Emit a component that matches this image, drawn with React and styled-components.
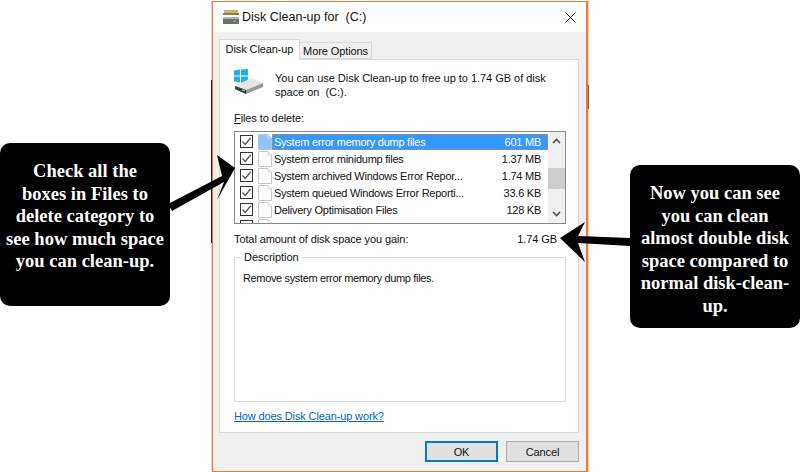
import React from "react";
import styled, { createGlobalStyle } from "styled-components";

const files = [
  { name: "System error memory dump files", size: "601 MB", selected: true },
  { name: "System error minidump files", size: "1.37 MB" },
  { name: "System archived Windows Error Repor...", size: "1.74 MB" },
  { name: "System queued Windows Error Reporti...", size: "33.6 KB" },
  { name: "Delivery Optimisation Files", size: "128 KB" },
];

const leftLines = ["Check all the", "boxes in Files to", "delete category to", "see how much space", "you can clean-up."];
const rightLines = ["Now you can see", "you can clean", "almost double disk", "space compared to", "normal disk-clean-", "up."];

const Global = createGlobalStyle`
  html, body { margin: 0; padding: 0; background: #fff; }
  #root { width: 800px; height: 472px; overflow: hidden; }
`;

const Page = styled.div`
  position: relative;
  width: 800px;
  height: 472px;
  display: grid;
  grid-template-columns: 170px 1fr 170px;
  background: #fff;
  font-family: "Liberation Sans", Arial, sans-serif;
  font-size: 11px;
  letter-spacing: -0.1px;
  color: #111;
`;

const Callout = styled.div`
  margin-top: ${(p) => p.$top}px;
  height: ${(p) => p.$height}px;
  box-sizing: border-box;
  padding-top: ${(p) => p.$pad}px;
  background: #000;
  border-radius: 10px;
  color: #fff;
  font-family: "Liberation Serif", serif;
  font-weight: bold;
  font-size: 18.5px;
  letter-spacing: 0;
  line-height: 22.6px;
  text-align: center;
  white-space: nowrap;
`;

const Middle = styled.div`
  display: flex;
  justify-content: center;
  padding-top: 1px;
`;

const Dialog = styled.div`
  width: 376px;
  height: 471px;
  box-sizing: border-box;
  border: 1px solid #f07a32;
  border-right-width: 2px;
  background: #f0f0f0;
  display: flex;
  flex-direction: column;
  box-shadow: -1px 0 0 #d8d8d8, 1px 0 0 #d8d8d8;
`;

const TitleBar = styled.div`
  height: 30px;
  flex: none;
  background: #fff;
  display: flex;
  align-items: center;
  padding: 0 10px 0 9px;
  gap: 2px;
  font-size: 12.5px;
  letter-spacing: 0;
`;

const TitleText = styled.span`
  flex: 1;
`;

const Tabs = styled.div`
  display: flex;
  align-items: flex-end;
  height: 27px;
  padding: 0 0 0 6px;
  flex: none;
`;

const Tab = styled.div`
  box-sizing: border-box;
  width: ${(p) => p.$width}px;
  height: ${(p) => (p.$active ? 21 : 17)}px;
  padding-bottom: ${(p) => (p.$active ? 2 : 0)}px;
  display: flex;
  align-items: center;
  justify-content: center;
  background: ${(p) => (p.$active ? "#fff" : "#f0f0f0")};
  border: 1px solid #d9d9d9;
  border-bottom: ${(p) => (p.$active ? "none" : "1px solid #d9d9d9")};
  border-left: ${(p) => (p.$active ? "1px solid #d9d9d9" : "none")};
  margin-bottom: ${(p) => (p.$active ? -1 : 0)}px;
  position: relative;
  z-index: ${(p) => (p.$active ? 1 : 0)};
`;

const Panel = styled.div`
  width: 360px;
  height: 374px;
  margin-left: 6px;
  box-sizing: border-box;
  background: #fff;
  border: 1px solid #d9d9d9;
  padding: 9px 12px 0 14px;
  display: flex;
  flex-direction: column;
`;

const Intro = styled.div`
  display: flex;
  gap: 11px;
  height: 41px;
  line-height: 14px;
`;

const IntroText = styled.div`
  padding-top: 2px;
  letter-spacing: -0.03px;
`;

const Label = styled.div`
  height: 17px;
  line-height: 17px;
  margin-bottom: 4px;
`;

const ListBox = styled.div`
  box-sizing: border-box;
  width: 332px;
  height: 93px;
  border: 1px solid #828790;
  display: flex;
  overflow: hidden;
`;

const Rows = styled.div`
  flex: 1;
  min-width: 0;
  padding-top: 1px;
`;

const Row = styled.div`
  height: 17px;
  display: flex;
  align-items: center;
  padding-left: 5px;
  gap: 5px;
`;

const Check = styled.div`
  box-sizing: border-box;
  width: 13px;
  height: 13px;
  flex: none;
  border: 1px solid #333;
  background: #fff;
  display: flex;
  align-items: center;
  justify-content: center;
`;

const RowLabel = styled.div`
  flex: 1;
  min-width: 0;
  height: 16px;
  display: flex;
  justify-content: space-between;
  align-items: center;
  padding: 0 7px 0 2px;
  margin-left: -5px;
  white-space: nowrap;
  letter-spacing: -0.25px;
  box-sizing: border-box;
  background: ${(p) => (p.$selected ? "#3399ff" : "transparent")};
  color: ${(p) => (p.$selected ? "#fff" : "#111")};
  outline: ${(p) => (p.$selected ? "1px dotted #e8862a" : "none")};
  outline-offset: -1px;
`;

const Scrollbar = styled.div`
  width: 17px;
  flex: none;
  background: #f0f0f0;
  display: flex;
  flex-direction: column;
  align-items: center;
  justify-content: space-between;
  padding: 6px 0;
  box-sizing: border-box;
  position: relative;
`;

const Thumb = styled.div`
  position: absolute;
  top: 36px;
  left: 0;
  width: 17px;
  height: 21px;
  background: #cdcdcd;
`;

const Total = styled.div`
  display: flex;
  justify-content: space-between;
  height: 17px;
  line-height: 17px;
  margin-top: 7px;
  width: 323px;
`;

const Group = styled.fieldset`
  box-sizing: border-box;
  width: 332px;
  height: 152px;
  margin: 2px 0 0;
  padding: 8px 8px 0 8px;
  border: 1px solid #d9d9d9;
  min-inline-size: 0;
  letter-spacing: -0.35px;
`;

const Legend = styled.legend`
  padding: 0 2px;
  margin-left: -1px;
  line-height: 14px;
  letter-spacing: -0.03px;
`;

const HelpLink = styled.a`
  margin-top: 6px;
  color: #0066cc;
  text-decoration: underline;
  line-height: 16px;
  letter-spacing: -0.13px;
`;

const Footer = styled.div`
  flex: 1;
  display: flex;
  justify-content: flex-end;
  gap: 8px;
  padding: 8px 7px 0 0;
`;

const Button = styled.div`
  box-sizing: border-box;
  width: 73px;
  height: 21px;
  display: flex;
  align-items: center;
  justify-content: center;
  background: #e1e1e1;
  border: ${(p) => (p.$primary ? "2px solid #0078d7" : "1px solid #adadad")};
`;

const Overlay = styled.svg`
  position: absolute;
  inset: 0;
  pointer-events: none;
`;

const Sliver = styled.div`
  position: absolute;
  left: ${(p) => p.$x}px;
  top: ${(p) => p.$y}px;
  width: 1px;
  height: ${(p) => p.$h}px;
  background: ${(p) => p.$c};
`;

const DriveIcon = () => (
  <svg width="18" height="16" viewBox="0 0 18 16">
    <rect x="2" y="1" width="14" height="3" fill="#c9b36a" />
    <rect x="1" y="4" width="16" height="2" fill="#8f7f45" />
    <rect x="1" y="8" width="16" height="7" fill="#6d6d6d" />
    <rect x="1" y="8" width="16" height="2" fill="#b5b5b5" />
    <rect x="11" y="11" width="3" height="2" fill="#4fc25a" />
  </svg>
);

const WinDriveIcon = () => (
  <svg width="30" height="26" viewBox="0 0 30 26" style={{ flex: "none" }}>
    <path d="M0 1.5 L6 0.6 V6.5 H0Z M7 0.5 L14 0 V6.5 H7Z M0 7.5 H6 V13.4 L0 12.5Z M7 7.5 H14 V14 L7 13.5Z" fill="#1fb0ea" />
    <path d="M1 17 L17 9 L29 14 L29 16 L12 24 L1 19Z" fill="#e6e6e6" />
    <path d="M1 17 L12 21 L29 14 L29 18 L12 25 L1 20Z" fill="#9a9a9a" />
    <path d="M1 17 L12 21 V25 L1 20Z" fill="#3d3d3d" />
    <rect x="8" y="20.5" width="3" height="1.5" fill="#6fd06f" />
  </svg>
);

const FileIcon = ({ selected }) => (
  <svg width="14" height="16" viewBox="0 0 14 16" style={{ flex: "none" }}>
    <path
      d="M0.5 0.5 H10 L13.5 4 V15.5 H0.5Z"
      fill={selected ? "#90c4f9" : "#fdfdfd"}
      stroke={selected ? "#a5c8ec" : "#c8c8c8"}
    />
    <path d="M10 0.5 V4 H13.5" fill="none" stroke={selected ? "#cfe4fa" : "#dcdcdc"} />
  </svg>
);

const Tick = () => (
  <svg width="11" height="11" viewBox="0 0 11 11">
    <path d="M1.5 5.5 L4.2 8.4 L9.6 2" fill="none" stroke="#555" strokeWidth="1.3" />
  </svg>
);

const Chevron = ({ up }) => (
  <svg width="9" height="6" viewBox="0 0 9 6">
    <path d={up ? "M1 5 L4.5 1.5 L8 5" : "M1 1 L4.5 4.5 L8 1"} fill="none" stroke="#505050" strokeWidth="1.6" />
  </svg>
);

const CloseIcon = () => (
  <svg width="11" height="11" viewBox="0 0 11 11">
    <path d="M0.5 0.5 L10.5 10.5 M10.5 0.5 L0.5 10.5" stroke="#222" strokeWidth="1" />
  </svg>
);

const Lines = ({ lines }) =>
  lines.map((line) => <div key={line}>{line}</div>);

export default function App() {
  return (
    <Page>
      <Global />
      <Callout $top={143} $height={163} $pad={17}>
        <Lines lines={leftLines} />
      </Callout>
      <Middle>
        <Dialog>
          <TitleBar>
            <DriveIcon />
            <TitleText>Disk Clean-up for &nbsp;(C:)</TitleText>
            <CloseIcon />
          </TitleBar>
          <Tabs>
            <Tab $active $width={81}>Disk Clean-up</Tab>
            <Tab $width={72}>More Options</Tab>
          </Tabs>
          <Panel>
            <Intro>
              <WinDriveIcon />
              <IntroText>
                You can use Disk Clean-up to free up to 1.74 GB of disk
                <br />
                space on &nbsp;(C:).
              </IntroText>
            </Intro>
            <Label>
              <u>F</u>iles to delete:
            </Label>
            <ListBox>
              <Rows>
                {files.map((f) => (
                  <Row key={f.name}>
                    <Check>
                      <Tick />
                    </Check>
                    <FileIcon selected={f.selected} />
                    <RowLabel $selected={f.selected}>
                      <span>{f.name}</span>
                      <span>{f.size}</span>
                    </RowLabel>
                  </Row>
                ))}
                <Row>
                  <Check />
                  <FileIcon />
                </Row>
              </Rows>
              <Scrollbar>
                <Chevron up />
                <Thumb />
                <Chevron />
              </Scrollbar>
            </ListBox>
            <Total>
              <span>Total amount of disk space you gain:</span>
              <span>1.74 GB</span>
            </Total>
            <Group>
              <Legend>Description</Legend>
              Remove system error memory dump files.
            </Group>
            <HelpLink>How does Disk Clean-up work?</HelpLink>
          </Panel>
          <Footer>
            <Button $primary>OK</Button>
            <Button>Cancel</Button>
          </Footer>
        </Dialog>
      </Middle>
      <Callout $top={165} $height={163} $pad={17}>
        <Lines lines={rightLines} />
      </Callout>
      <Sliver $x={211} $y={80} $h={163} $c="#222" />
      <Sliver $x={588} $y={85} $h={24} $c="#666" />
      <Overlay width="800" height="472" viewBox="0 0 800 472">
        <path d="M168 204 L222 176 L217 155 L235 168 L217 200 L224 182 L172 211Z" fill="#000" />
        <path d="M630 238 L578 236 L585 222 L560 238 L585 262 L578 243 L630 246Z" fill="#000" />
      </Overlay>
    </Page>
  );
}
